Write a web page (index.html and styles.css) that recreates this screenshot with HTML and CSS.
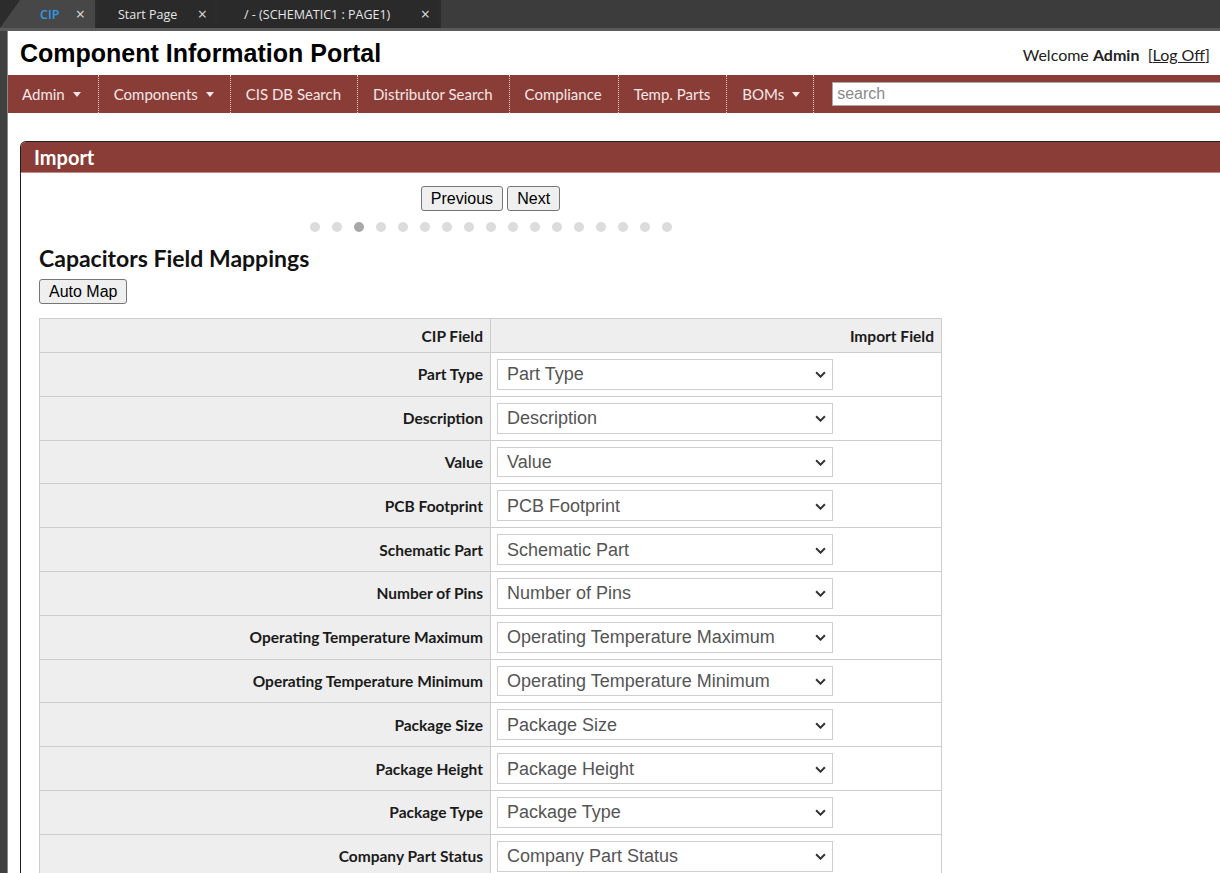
FILE: index.html
```html
<!DOCTYPE html>
<html lang="en">
<head>
  <meta charset="UTF-8" />
  <meta name="viewport" content="width=device-width, initial-scale=1.0"/>
  <title>Component Information Portal</title>
  <link rel="stylesheet" href="styles.css">
</head>
<body>

  <!-- Document tabs of the host window -->
  <div class="doc-tabs">
    <div class="doc-tab active"><span class="tab-name">CIP</span><span class="tab-x">×</span></div>
    <div class="doc-tab start"><span class="tab-name">Start Page</span><span class="tab-x">×</span></div>
    <div class="doc-tab sheet"><span class="tab-name">/ - (SCHEMATIC1 : PAGE1)</span><span class="tab-x">×</span></div>
    <div class="doc-rest"></div>
  </div>

  <div class="page">
    <!-- Header -->
    <div class="site-header">
      <h1>Component Information Portal</h1>
      <div class="welcome">Welcome <b>Admin</b> &nbsp;[<a href="#">Log Off</a>]</div>
    </div>

    <!-- Main menu -->
    <div class="menu">
      <a class="menu-item first" href="#">Admin <span class="caret"></span></a>
      <a class="menu-item" href="#">Components <span class="caret"></span></a>
      <a class="menu-item" href="#">CIS DB Search</a>
      <a class="menu-item" href="#">Distributor Search</a>
      <a class="menu-item" href="#">Compliance</a>
      <a class="menu-item" href="#">Temp. Parts</a>
      <a class="menu-item last" href="#">BOMs <span class="caret"></span></a>
      <input class="menu-search" type="text" placeholder="search">
    </div>

    <!-- Import wizard -->
    <div class="panel">
      <div class="panel-head">Import</div>
      <div class="panel-body">
        <div class="wizard">
          <div class="pager">
            <button class="btn">Previous</button>
            <button class="btn">Next</button>
          </div>
          <div class="dots">
            <span class="dot"></span><span class="dot"></span><span class="dot current"></span>
            <span class="dot"></span><span class="dot"></span><span class="dot"></span>
            <span class="dot"></span><span class="dot"></span><span class="dot"></span>
            <span class="dot"></span><span class="dot"></span><span class="dot"></span>
            <span class="dot"></span><span class="dot"></span><span class="dot"></span>
            <span class="dot"></span><span class="dot"></span>
          </div>

          <h2>Capacitors Field Mappings</h2>
          <button class="btn">Auto Map</button>

          <table class="mapping">
            <tr><th class="cip-col">CIP Field</th><th>Import Field</th></tr>
            <tr><td class="label">Part Type</td><td class="field"><div class="pick"><select><option>Part Type</option></select><svg class="chev" viewBox="0 0 10 6"><path d="M1 1l4 4 4-4"/></svg></div></td></tr>
            <tr><td class="label">Description</td><td class="field"><div class="pick"><select><option>Description</option></select><svg class="chev" viewBox="0 0 10 6"><path d="M1 1l4 4 4-4"/></svg></div></td></tr>
            <tr><td class="label">Value</td><td class="field"><div class="pick"><select><option>Value</option></select><svg class="chev" viewBox="0 0 10 6"><path d="M1 1l4 4 4-4"/></svg></div></td></tr>
            <tr><td class="label">PCB Footprint</td><td class="field"><div class="pick"><select><option>PCB Footprint</option></select><svg class="chev" viewBox="0 0 10 6"><path d="M1 1l4 4 4-4"/></svg></div></td></tr>
            <tr><td class="label">Schematic Part</td><td class="field"><div class="pick"><select><option>Schematic Part</option></select><svg class="chev" viewBox="0 0 10 6"><path d="M1 1l4 4 4-4"/></svg></div></td></tr>
            <tr><td class="label">Number of Pins</td><td class="field"><div class="pick"><select><option>Number of Pins</option></select><svg class="chev" viewBox="0 0 10 6"><path d="M1 1l4 4 4-4"/></svg></div></td></tr>
            <tr><td class="label">Operating Temperature Maximum</td><td class="field"><div class="pick"><select><option>Operating Temperature Maximum</option></select><svg class="chev" viewBox="0 0 10 6"><path d="M1 1l4 4 4-4"/></svg></div></td></tr>
            <tr><td class="label">Operating Temperature Minimum</td><td class="field"><div class="pick"><select><option>Operating Temperature Minimum</option></select><svg class="chev" viewBox="0 0 10 6"><path d="M1 1l4 4 4-4"/></svg></div></td></tr>
            <tr><td class="label">Package Size</td><td class="field"><div class="pick"><select><option>Package Size</option></select><svg class="chev" viewBox="0 0 10 6"><path d="M1 1l4 4 4-4"/></svg></div></td></tr>
            <tr><td class="label">Package Height</td><td class="field"><div class="pick"><select><option>Package Height</option></select><svg class="chev" viewBox="0 0 10 6"><path d="M1 1l4 4 4-4"/></svg></div></td></tr>
            <tr><td class="label">Package Type</td><td class="field"><div class="pick"><select><option>Package Type</option></select><svg class="chev" viewBox="0 0 10 6"><path d="M1 1l4 4 4-4"/></svg></div></td></tr>
            <tr><td class="label">Company Part Status</td><td class="field"><div class="pick"><select><option>Company Part Status</option></select><svg class="chev" viewBox="0 0 10 6"><path d="M1 1l4 4 4-4"/></svg></div></td></tr>
          </table>
        </div>
      </div>
    </div>
  </div>

</body>
</html>
```

FILE: styles.css
```css
body { margin: 0; background: #404040; overflow: hidden; font-family: Lato, "Open Sans", sans-serif; color: #1a1a1a; }

/* host window tabs */
.doc-tabs { display: flex; height: 28px; background: #2c2c2c; border-bottom: 3px solid #5b5b5b; font-family: "Open Sans", sans-serif; font-size: 12.5px; color: #e6e6e6; }
.doc-tab { display: flex; align-items: center; justify-content: space-between; height: 100%; background: #2a2a2a; margin-right: 2px; box-sizing: border-box; }
.doc-tab.active { width: 95px; padding: 0 10px 0 40px; background: #474747; clip-path: polygon(20px 0, 100% 0, 100% 100%, 0 100%); }
.doc-tab.active .tab-name { color: #2f9be8; font-weight: 600; }
.doc-tab.start { width: 118px; padding: 0 8px 0 21px; }
.doc-tab.sheet { width: 222px; padding: 0 9px 0 27px; }
.tab-x { font-size: 16px; color: #dcdcdc; }
.doc-rest { flex: 1; background: #3c3c3c; }

.page { margin-left: 7px; border-left: 1px solid #8a8a8a; background: #fff; height: 842px; }

/* header */
.site-header { display: flex; justify-content: space-between; align-items: center; height: 44px; padding: 0 10px 0 12px; }
.site-header h1 { margin: 0; font-family: "Liberation Sans", Arial, sans-serif; font-size: 25px; font-weight: bold; color: #000; }
.welcome { font-size: 16px; color: #222; margin-top: 3px; white-space: nowrap; }
.welcome b { font-weight: bold; }
.welcome a { color: #222; }

/* menu */
.menu { display: flex; align-items: center; height: 38px; background: #8a3c37; white-space: nowrap; }
.menu-item { display: flex; align-items: center; height: 38px; padding: 0 16px 0 15px; color: #f4e8e6; font-size: 15px; text-decoration: none; border-right: 1px dotted rgba(255,255,255,0.75); }
.menu-item.first { padding: 0 17px 0 14px; }
.menu-item.last { padding-right: 13px; }
.caret { display: inline-block; width: 0; height: 0; margin-left: 8px; border-left: 4px solid transparent; border-right: 4px solid transparent; border-top: 5px solid #f4e8e6; }
.menu-search { flex: none; margin-left: 18px; width: 420px; height: 24px; box-sizing: border-box; border: 1px solid #a9a9a9; padding: 0 4px; font-family: "Liberation Sans", Arial, sans-serif; font-size: 16px; }
.menu-search::placeholder { color: #8a8a8a; }

/* import panel */
.panel { margin: 28px -40px 0 12px; border: 1px solid #1f1f1f; border-bottom: none; border-radius: 6px 6px 0 0; }
.panel-head { height: 30px; line-height: 30px; padding-left: 13px; background: #8a3c37; border-bottom: 1px solid #c98a85; border-radius: 5px 5px 0 0; color: #fff; font-size: 20px; font-weight: bold; }
.panel-body { padding: 13px 0 0 18px; }
.wizard { width: 903px; }

.btn { height: 25px; padding: 0 9px; font-family: "Liberation Sans", Arial, sans-serif; font-size: 16px; color: #000; background: #efefef; border: 1px solid #767676; border-radius: 3px; }
.pager { text-align: center; }
.dots { display: flex; justify-content: center; gap: 12px; margin-top: 11px; }
.dot { width: 10px; height: 10px; border-radius: 50%; background: #dcdcdc; }
.dot.current { background: #a8a8a8; }

.wizard h2 { margin: 13px 0 8px; font-size: 23px; line-height: 26px; font-weight: bold; color: #111; }

/* field mapping table */
.mapping { margin-top: 14px; width: 903px; border-collapse: collapse; border: 1px solid #cdcdcd; }
.mapping th, .mapping td { border: 1px solid #cdcdcd; }
.mapping th { height: 33px; padding: 0 7px; background: #eee; text-align: right; font-size: 15.5px; font-weight: bold; }
.mapping .cip-col { width: 436px; }
.mapping .label { padding: 0 7px; background: #eee; text-align: right; font-size: 15.5px; font-weight: bold; white-space: nowrap; }
.mapping .field { padding: 6px 6px; background: #fff; }
.pick { position: relative; width: 336px; height: 30.8px; }
.pick select { width: 100%; height: 100%; box-sizing: border-box; padding: 0 0 0 9px; appearance: none; border: 1px solid #cfcfcf; background: #fff; color: #555; font-family: "Liberation Sans", Arial, sans-serif; font-size: 18px; }
.chev { position: absolute; right: 7px; top: 50%; width: 11px; height: 7px; margin-top: -3px; fill: none; stroke: #333; stroke-width: 1.8; pointer-events: none; }
```
